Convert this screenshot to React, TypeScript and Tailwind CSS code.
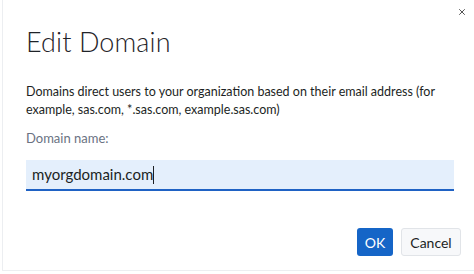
import { X } from 'lucide-react';

export default function App() {
    return (
        <div className="w-[474px] h-[274px] bg-white overflow-hidden" style={{ fontFamily: 'Lato, "Noto Sans", sans-serif' }}>
            <div className="relative h-[271px] ml-[2px] border-l border-b border-[#eceef1] bg-white flex flex-col">
                {/* Close */}
                <button className="absolute top-[7px] right-[7px] text-[#333] p-0">
                    <X size={10} strokeWidth={2} />
                </button>

                <div className="pl-[23px] pr-[20px] pt-[26px] flex flex-col">
                    <h2 className="text-[27px] leading-[32px] font-light text-[#1f2328] tracking-[0.1px]">Edit Domain</h2>

                    <p className="mt-[25px] text-[12.5px] leading-[18px] text-[#1c1f24]">
                        Domains direct users to your organization based on their email address (for example, sas.com, *.sas.com, example.sas.com)
                    </p>

                    <label className="mt-[10px] text-[13px] leading-[18px] text-[#6a7282]">Domain name:</label>

                    <div className="mt-[13px] h-[31px] bg-[#e4effc] border-b-2 border-[#1f62c4] flex items-center pl-[6px]">
                        <span className="text-[15px] text-[#1c1f24]">myorgdomain.com</span>
                        <span className="w-px h-[18px] bg-[#1c1f24]"></span>
                    </div>
                </div>

                <div className="mt-auto mb-[14px] pr-[13px] flex justify-end gap-[8px]">
                    <button className="h-[28px] w-[36px] rounded-[3px] bg-[#1565c7] text-white text-[14px]">OK</button>
                    <button className="h-[28px] w-[60px] rounded-[3px] bg-[#f7f8fa] border border-[#e1e4e8] text-[#1c1f24] text-[14px]">Cancel</button>
                </div>
            </div>
        </div>
    );
}
